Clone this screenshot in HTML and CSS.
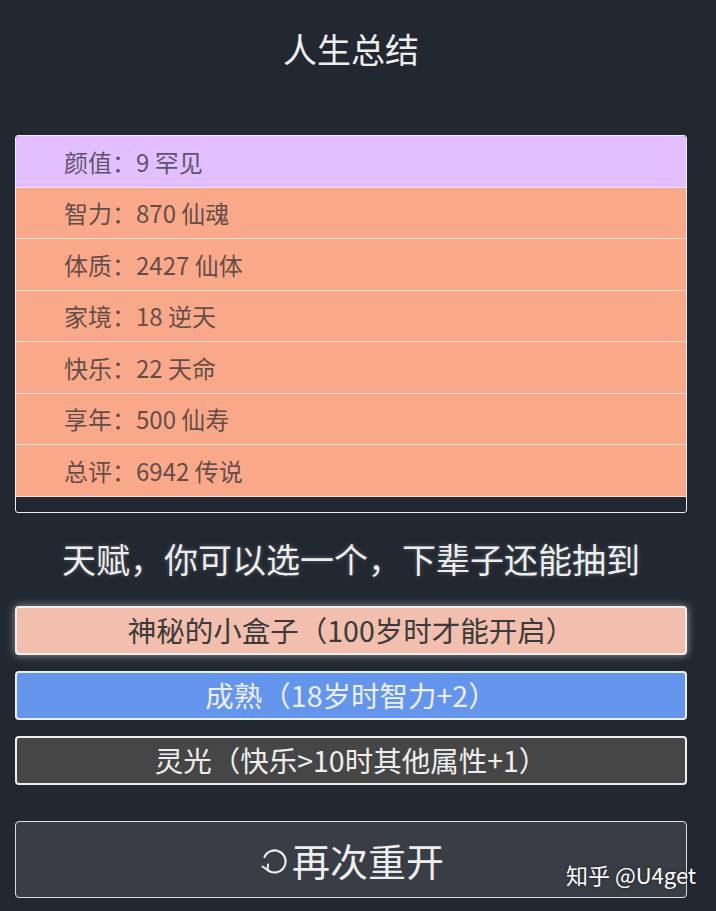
FILE: index.html
```html
<!DOCTYPE html>
<html lang="zh-CN">
<head>
<meta charset="utf-8">
<title>人生总结</title>
<link rel="stylesheet" href="styles.css">
</head>
<body>
<main class="page">
  <h1 class="title">人生总结</h1>
  <ul class="summary">
    <li class="row grade-purple">颜值：9 罕见</li>
    <li class="row grade-orange">智力：870 仙魂</li>
    <li class="row grade-orange">体质：2427 仙体</li>
    <li class="row grade-orange">家境：18 逆天</li>
    <li class="row grade-orange">快乐：22 天命</li>
    <li class="row grade-orange">享年：500 仙寿</li>
    <li class="row grade-orange">总评：6942 传说</li>
  </ul>
  <h2 class="subtitle">天赋，你可以选一个，下辈子还能抽到</h2>
  <div class="talents">
    <button class="talent talent-selected">神秘的小盒子（100岁时才能开启）</button>
    <button class="talent talent-blue">成熟（18岁时智力+2）</button>
    <button class="talent talent-gray">灵光（快乐&gt;10时其他属性+1）</button>
  </div>
  <button class="restart">
    <svg class="restart-icon" viewBox="0 0 32 32" width="32" height="32" aria-hidden="true">
      <path d="M9 24.5 A11 11 0 1 0 6.5 12" fill="none" stroke="#eeeeee" stroke-width="2.2" stroke-linecap="round"/>
      <path d="M4.5 21.5 L9.5 25 L10 19.5" fill="none" stroke="#eeeeee" stroke-width="2" stroke-linecap="round" stroke-linejoin="round"/>
    </svg>
    <span>再次重开</span>
  </button>
  <div class="watermark">知乎 @U4get</div>
</main>
</body>
</html>
```
FILE: styles.css
```css
html, body {
  margin: 0;
  padding: 0;
  background: #222831;
}
body {
  font-family: "Noto Sans CJK SC", "Noto Sans", "Liberation Sans", sans-serif;
  color: #eeeeee;
}
.page {
  width: 672px;
  margin-left: 15px;
  position: relative;
  height: 911px;
}
.title {
  margin: 0 0 35px;
  height: 100px;
  line-height: 98px;
  text-align: center;
  font-size: 34px;
  font-weight: 400;
  color: #eeeeee;
}
.summary {
  list-style: none;
  margin: 0;
  padding: 0 0 15px;
  border: 1px solid #eeeeee;
  border-radius: 3px;
  overflow: hidden;
}
.row {
  box-sizing: border-box;
  height: 51.5px;
  display: flex;
  align-items: center;
  padding-left: 48px;
  font-size: 24px;
  color: rgba(40, 40, 48, 0.72);
  border-bottom: 1px solid rgba(255, 240, 235, 0.75);
}
.grade-purple { background: #e3bfff; }
.grade-orange { background: #f9a98a; }
.subtitle {
  margin: 0;
  height: 93px;
  padding-bottom: 1px;
  box-sizing: border-box;
  display: flex;
  align-items: center;
  justify-content: center;
  font-size: 34px;
  font-weight: 400;
  color: #eeeeee;
  text-shadow: 0 0 4px rgba(255, 255, 255, 0.25);
}
.talents {
  display: flex;
  flex-direction: column;
  gap: 16px;
}
.talent {
  height: 49px;
  border: 2px solid #eeeeee;
  border-radius: 4px;
  font-family: inherit;
  font-size: 28.5px;
  padding: 0;
  line-height: 1;
}
.talent-selected {
  background: #f2bead;
  color: #3a3a3a;
  box-shadow: 0 0 8px rgba(255, 255, 255, 0.55);
}
.talent-blue {
  background: #6495ed;
  color: #eeeeee;
}
.talent-gray {
  background: #464646;
  color: #eeeeee;
}
.restart {
  margin-top: 36px;
  width: 100%;
  height: 77px;
  background: #393e46;
  border: 1px solid #dddddd;
  border-radius: 4px;
  display: flex;
  align-items: center;
  justify-content: center;
  color: #eeeeee;
  font-family: inherit;
  font-size: 38px;
  padding: 0;
}
.restart-icon {
  width: 32px;
  height: 32px;
  margin-right: 2px;
  margin-top: 4px;
}
.watermark {
  position: absolute;
  left: 551px;
  top: 858px;
  font-size: 22px;
  color: #ffffff;
  text-shadow: 0 0 3px rgba(0, 0, 0, 0.6);
  white-space: nowrap;
}
```
